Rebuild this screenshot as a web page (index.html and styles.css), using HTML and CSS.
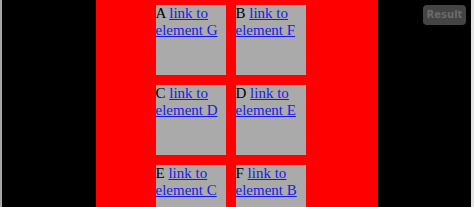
FILE: index.html
```html
<!DOCTYPE html>
<html lang="en">
<head>
    <meta charset="UTF-8">
    <title>Result</title>
    <link rel="stylesheet" href="styles.css">
</head>
<body>
    <div class="frame">
        <div class="wrapper">
            <div class="grid">
                <div class="cell">A <a href="#g">link to element G</a></div>
                <div class="cell">B <a href="#f">link to element F</a></div>
                <div class="cell">C <a href="#d">link to element D</a></div>
                <div class="cell">D <a href="#e">link to element E</a></div>
                <div class="cell">E <a href="#c">link to element C</a></div>
                <div class="cell">F <a href="#b">link to element B</a></div>
            </div>
        </div>
        <span class="result-btn">Result</span>
    </div>
</body>
</html>
```

FILE: styles.css
```css
html, body {
    margin: 0;
    padding: 0;
    height: 100%;
    overflow: hidden;
}

body {
    background: #000;
    font-family: "Liberation Serif", "Times New Roman", serif;
    font-size: 15px;
    color: #000;
}

.frame {
    position: relative;
    height: 100%;
    border-left: 2px solid #a6a6a6;
    border-right: 3px solid #e4e4e4;
    box-sizing: border-box;
}

.wrapper {
    width: 282px;
    height: 100%;
    margin: 0 auto;
    background: #ff0000;
}

.grid {
    display: grid;
    grid-template-columns: 70px 70px;
    grid-auto-rows: 70px;
    gap: 10px;
    padding: 5px 0 0 60px;
}

.cell {
    background: #aaa;
    line-height: 17px;
}

.cell a {
    color: #1a1ae6;
}

.result-btn {
    position: absolute;
    top: 5px;
    right: 5px;
    width: 43px;
    height: 20px;
    line-height: 20px;
    text-align: center;
    background: #444;
    border-radius: 4px;
    color: #6a6a6a;
    font-family: "DejaVu Sans", sans-serif;
    font-size: 10px;
    font-weight: bold;
}
```
